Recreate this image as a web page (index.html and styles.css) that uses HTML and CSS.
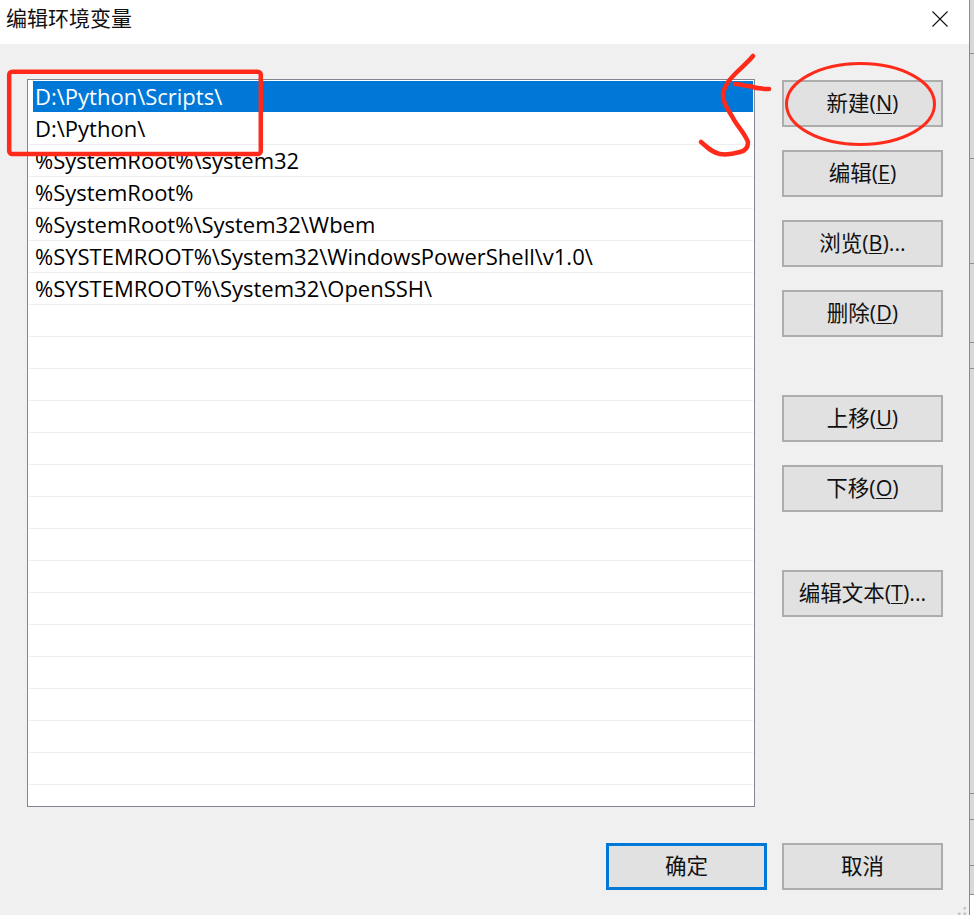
FILE: index.html
```html
<!DOCTYPE html>
<html lang="zh-CN">
<head>
<meta charset="utf-8">
<title>编辑环境变量</title>
<link rel="stylesheet" href="styles.css">
</head>
<body>
<div class="screen">
  <div class="dialog">
    <header class="titlebar">
      <span class="title">编辑环境变量</span>
      <svg class="close" width="16" height="16" viewBox="0 0 16 16"><path d="M0.5 0.5L15.5 15.5M15.5 0.5L0.5 15.5" stroke="#111" stroke-width="1.1" fill="none"/></svg>
    </header>
    <main class="content">
      <div class="columns">
        <div class="list">
          <div class="row selected"><span class="focus">D:\Python\Scripts\</span></div>
          <div class="row">D:\Python\</div>
          <div class="row">%SystemRoot%\system32</div>
          <div class="row">%SystemRoot%</div>
          <div class="row">%SystemRoot%\System32\Wbem</div>
          <div class="row">%SYSTEMROOT%\System32\WindowsPowerShell\v1.0\</div>
          <div class="row">%SYSTEMROOT%\System32\OpenSSH\</div>
          <div class="row"></div><div class="row"></div><div class="row"></div><div class="row"></div>
          <div class="row"></div><div class="row"></div><div class="row"></div><div class="row"></div>
          <div class="row"></div><div class="row"></div><div class="row"></div><div class="row"></div>
          <div class="row"></div><div class="row"></div><div class="row"></div>
        </div>
        <div class="actions">
          <div class="group">
            <button class="btn">新建(<u>N</u>)</button>
            <button class="btn">编辑(<u>E</u>)</button>
            <button class="btn">浏览(<u>B</u>)...</button>
            <button class="btn">删除(<u>D</u>)</button>
          </div>
          <div class="group">
            <button class="btn">上移(<u>U</u>)</button>
            <button class="btn">下移(<u>O</u>)</button>
          </div>
          <div class="group">
            <button class="btn">编辑文本(<u>T</u>)...</button>
          </div>
        </div>
      </div>
      <footer class="footer">
        <button class="btn primary">确定</button>
        <button class="btn">取消</button>
      </footer>
      <svg class="grip" width="8" height="8" viewBox="0 0 8 8"><path d="M5.5 0h2.5v2.5h-2.5zM0 5.5h2.5v2.5h-2.5zM5.5 5.5h2.5v2.5h-2.5z" fill="#c4c4c4"/></svg>
    </main>
  </div>
  <div class="strip">
    <div class="cell" style="height:54px"></div>
    <div class="cell" style="height:105px"></div>
    <div class="cell" style="height:105px"></div>
    <div class="cell" style="height:79px"></div>
    <div class="cell" style="height:26px"></div>
    <div class="cell" style="height:425px"></div>
    <div class="cell" style="height:26px"></div>
    <div class="cell" style="height:46px"></div>
    <div class="cell" style="height:29px"></div>
  </div>
  <svg class="ink" width="974" height="915" viewBox="0 0 974 915">
    <rect x="9.2" y="71.7" width="251.6" height="82.3" rx="3" fill="none" stroke="#ff2a1a" stroke-width="4.5"/>
    <ellipse cx="860.5" cy="104" rx="74" ry="40.5" fill="none" stroke="#ff2a1a" stroke-width="3"/>
    <path d="M753 56C748 62 742 67 737 72C731 78 725 84 723 93C722 101 727 108 733 118C737 126 744 132 748 142C748 148 745 151 740 152C733 154 726 155 720 154C713 153 708 148 701 142" fill="none" stroke="#ff2a1a" stroke-width="4.5" stroke-linecap="round" stroke-linejoin="round"/>
    <path d="M735 84C741 84 744 86 749 86C755 88 762 89 769 89" fill="none" stroke="#ff2a1a" stroke-width="4.5" stroke-linecap="round"/>
  </svg>
</div>
</body>
</html>
```

FILE: styles.css
```css
* { box-sizing: border-box; }
html, body { margin: 0; padding: 0; background: #f0f0f0; }
body { overflow: hidden; }
.screen {
  position: relative;
  display: flex;
  width: 974px;
  height: 915px;
  overflow: hidden;
  font-family: "Open Sans", "Noto Sans CJK SC", sans-serif;
  color: #000;
}
.dialog {
  display: flex;
  flex-direction: column;
  width: 970px;
  height: 915px;
  border-right: 1px solid #8a8a8a;
  background: #f0f0f0;
}
.titlebar {
  display: flex;
  align-items: center;
  justify-content: space-between;
  flex: none;
  height: 44px;
  padding: 0 21px 10px 6px;
  background: #fff;
}
.title {
  font-family: "Noto Sans CJK SC", sans-serif;
  font-size: 21px;
  line-height: 28px;
  color: #111;
}
.close { display: block; margin-top: 3px; }
.content {
  position: relative;
  flex: 1;
  padding: 35px 26px 0 27px;
}
.columns { display: flex; gap: 27px; }
.list {
  flex: none;
  width: 728px;
  height: 728px;
  padding: 1px 1px 0 1px;
  overflow: hidden;
  border: 1px solid #82878f;
  background: #fff;
}
.row {
  height: 32px;
  padding: 0 0 1px 6px;
  border-bottom: 1px solid #eeeeee;
  font-size: 22px;
  line-height: 31px;
  white-space: nowrap;
}
.selected {
  padding: 0 0 0 4px;
  margin-right: 0;
  border-bottom: 1px solid #fff;
  background: #0078d7 content-box;
  color: #fff;
}
.focus {
  display: block;
  height: 31px;
  padding-left: 2px;
  background: #0078d7;
}
.actions { display: flex; flex-direction: column; gap: 58px; padding-top: 1px; }
.group { display: flex; flex-direction: column; gap: 23px; }
.btn {
  display: block;
  width: 161px;
  height: 47px;
  padding: 0 0 2px 0;
  border: 2px solid #adadad;
  background: #e1e1e1;
  font-family: "Open Sans", "Noto Sans CJK SC", sans-serif;
  font-size: 21.5px;
  line-height: 28px;
  color: #111;
  white-space: nowrap;
}
.btn u { text-underline-offset: 2px; text-decoration-thickness: 1px; }
.primary { border: 3px solid #0078d7; }
.footer {
  display: flex;
  justify-content: flex-end;
  gap: 15px;
  margin-top: 36px;
}
.grip { position: absolute; right: 3px; bottom: 0; }
.strip {
  display: flex;
  flex-direction: column;
  flex: none;
  width: 4px;
  height: 915px;
  background: #fff;
}
.cell { border-bottom: 1px solid #8f8f8f; background: #d8d8d8; }
.ink { position: absolute; left: 0; top: 0; pointer-events: none; }
```
